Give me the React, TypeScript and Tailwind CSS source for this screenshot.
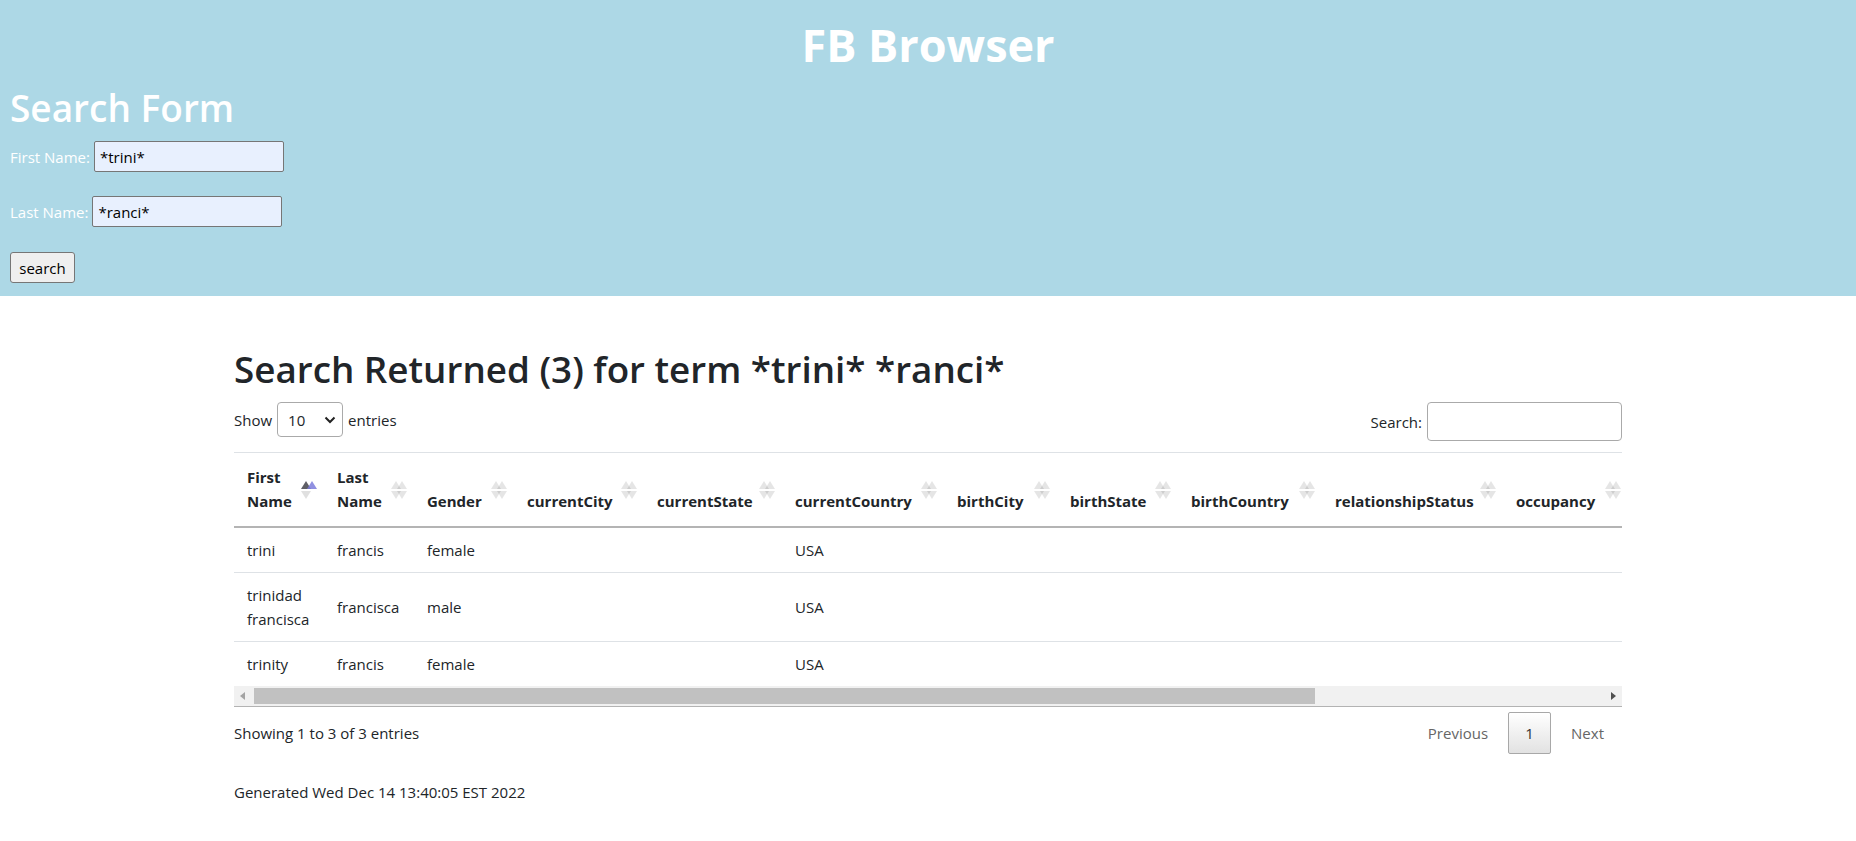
import React from "react";

interface Column {
  label: string;
  width: string;
  wrap?: boolean;
  active?: boolean;
}

const columns: Column[] = [
  { label: "First Name", width: "w-[90px]", wrap: true, active: true },
  { label: "Last Name", width: "w-[90px]", wrap: true },
  { label: "Gender", width: "w-[100px]" },
  { label: "currentCity", width: "w-[130px]" },
  { label: "currentState", width: "w-[138px]" },
  { label: "currentCountry", width: "w-[162px]" },
  { label: "birthCity", width: "w-[113px]" },
  { label: "birthState", width: "w-[121px]" },
  { label: "birthCountry", width: "w-[144px]" },
  { label: "relationshipStatus", width: "w-[181px]" },
  { label: "occupancy", width: "w-[125px]" },
];

const rows: string[][] = [
  ["trini", "francis", "female", "", "", "USA", "", "", "", "", ""],
  ["trinidad francisca", "francisca", "male", "", "", "USA", "", "", "", "", ""],
  ["trinity", "francis", "female", "", "", "USA", "", "", "", "", ""],
];

function SortIcon({ active }: { active?: boolean }) {
  if (active) {
    return (
      <svg width="16" height="20" viewBox="0 0 16 20" className="absolute right-[7px] top-1/2 -translate-y-1/2">
        <polygon points="0,9 5,1 10,9" fill="#5f5f66" />
        <polygon points="6,9 11,1 16,9" fill="#7d7ddc" opacity="0.85" />
        <polygon points="0,11 10,11 5,19" fill="#000" opacity="0.12" />
      </svg>
    );
  }
  return (
    <svg width="16" height="20" viewBox="0 0 16 20" className="absolute right-[7px] top-1/2 -translate-y-1/2">
      <polygon points="0,9 5,1 10,9" fill="#000" opacity="0.1" />
      <polygon points="6,9 11,1 16,9" fill="#000" opacity="0.1" />
      <polygon points="0,11 10,11 5,19" fill="#000" opacity="0.1" />
      <polygon points="6,11 16,11 11,19" fill="#000" opacity="0.1" />
    </svg>
  );
}

export default function App() {
  return (
    <div className="min-h-screen bg-white font-['Open_Sans',sans-serif] text-[15px] leading-6 text-[#212529]">
      {/* Search form */}
      <header className="h-[296px] bg-[#add8e6] px-[10px] pt-[18px] text-white">
        <h1 className="text-center text-[45px] font-bold leading-[54px]">FB Browser</h1>
        <h2 className="mt-[13px] text-[37px] font-semibold leading-[45px]">Search Form</h2>
        <div className="mt-[11px] flex h-[31px] items-center gap-[4px]">
          <label>First Name:</label>
          <input
            defaultValue="*trini*"
            className="h-[31px] w-[190px] rounded-[2px] border border-[#767676] bg-[#e8f0fe] px-[5px] text-[15px] text-black outline-none"
          />
        </div>
        <div className="mt-[24px] flex h-[31px] items-center gap-[4px]">
          <label>Last Name:</label>
          <input
            defaultValue="*ranci*"
            className="h-[31px] w-[190px] rounded-[2px] border border-[#767676] bg-[#e8f0fe] px-[5px] text-[15px] text-black outline-none"
          />
        </div>
        <button className="mt-[25px] h-[31px] w-[65px] rounded-[3px] border border-[#767676] bg-[#efefef] text-[15px] text-black">
          search
        </button>
      </header>

      {/* Results */}
      <main className="mx-auto w-[1388px] pt-[51px]">
        <h1 className="text-[36.8px] font-semibold leading-[45px]">
          Search Returned (3) for term *trini* *ranci*
        </h1>

        <div className="mt-[10px] flex items-start justify-between">
          <div className="flex h-[35px] items-center gap-[5px]">
            <span>Show</span>
            <div className="flex h-[35px] w-[66px] items-center justify-between rounded-[4px] border border-[#aaa] pl-[10px] pr-[6px]">
              <span>10</span>
              <svg width="12" height="8" viewBox="0 0 12 8">
                <path d="M1.5 1.5 L6 6 L10.5 1.5" fill="none" stroke="#222" strokeWidth="2" />
              </svg>
            </div>
            <span>entries</span>
          </div>
          <div className="flex h-[39px] items-center gap-[5px]">
            <span>Search:</span>
            <input className="h-[39px] w-[195px] rounded-[4px] border border-[#aaa] px-2 outline-none" />
          </div>
        </div>

        <div className="mt-[11px] overflow-hidden border-t border-[#dee2e6]">
          <table className="w-[1394px] table-fixed border-collapse">
            <colgroup>
              {columns.map((c) => (
                <col key={c.label} className={c.width} />
              ))}
            </colgroup>
            <thead>
              <tr className="border-b-2 border-[#b4b4b4]">
                {columns.map((c) => (
                  <th
                    key={c.label}
                    className={
                      "relative pb-[13px] pl-[13px] pr-[22px] pt-[12px] text-left align-bottom font-bold " +
                      (c.wrap ? "" : "whitespace-nowrap")
                    }
                  >
                    {c.label}
                    <SortIcon active={c.active} />
                  </th>
                ))}
              </tr>
            </thead>
            <tbody>
              {rows.map((r, i) => (
                <tr key={i} className={i < rows.length - 1 ? "border-b border-[#dee2e6]" : ""}>
                  {r.map((v, j) => (
                    <td key={j} className="px-[13px] py-[10px] align-middle">
                      {v}
                    </td>
                  ))}
                </tr>
              ))}
            </tbody>
          </table>
        </div>

        {/* horizontal scrollbar */}
        <div className="flex h-[21px] items-center border-b border-[#b3b3b3] bg-[#f1f1f1]">
          <div className="flex h-full w-[17px] items-center justify-center">
            <svg width="5" height="8" viewBox="0 0 5 8">
              <polygon points="5,0 0,4 5,8" fill="#a3a3a3" />
            </svg>
          </div>
          <div className="ml-[3px] h-[16px] w-[1061px] bg-[#c1c1c1]" />
          <div className="flex-1" />
          <div className="flex h-full w-[17px] items-center justify-center">
            <svg width="5" height="8" viewBox="0 0 5 8">
              <polygon points="0,0 5,4 0,8" fill="#505050" />
            </svg>
          </div>
        </div>

        <div className="mt-[5px] flex h-[42px] items-center justify-between">
          <span>Showing 1 to 3 of 3 entries</span>
          <div className="flex items-center gap-[4px]">
            <span className="px-[16px] text-[#666]">Previous</span>
            <span className="flex h-[42px] w-[43px] items-center justify-center rounded-[2px] border border-[#a8a8a8] bg-linear-to-b from-white to-[#e2e2e2] text-[#333]">
              1
            </span>
            <span className="pl-[16px] pr-[18px] text-[#666]">Next</span>
          </div>
        </div>

        <p className="mt-[26px]">Generated Wed Dec 14 13:40:05 EST 2022</p>
      </main>
    </div>
  );
}
